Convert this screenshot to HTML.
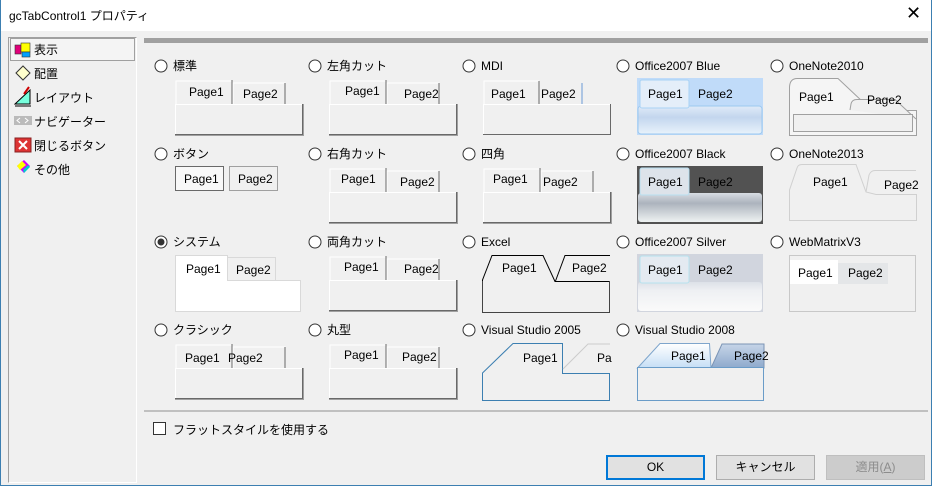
<!DOCTYPE html>
<html><head><meta charset="utf-8"><style>
body{margin:0;width:932px;height:486px;overflow:hidden;background:#f0f0f0;font-family:"Liberation Sans","Noto Sans CJK JP",sans-serif;font-size:12px;color:#000;position:relative}
.a{position:absolute}
.btn{position:absolute;top:455px;height:25px;width:99px;background:#e1e1e1;border:1px solid #adadad;box-sizing:border-box;text-align:center;line-height:23px;font-size:12px}
.li{position:absolute;left:14px;height:22px;line-height:22px;font-size:12px}
svg text{font-family:"Liberation Sans","Noto Sans CJK JP",sans-serif;font-size:12px}
</style></head><body>
<div class="a" style="left:0;top:0;width:932px;height:31px;background:#fff"></div>
<div class="a" style="left:9px;top:7px;font-size:12px">gcTabControl1 プロパティ</div>
<div class="a" style="left:906px;top:3px;font-size:18px;font-weight:300">✕</div>
<div class="a" style="left:0;top:0;width:1px;height:486px;background:#3c7fb1"></div>
<div class="a" style="right:0;top:0;width:1px;height:486px;background:#3c7fb1"></div>
<div class="a" style="left:0;bottom:0;width:932px;height:1px;background:#3c7fb1"></div>

<div class="a" style="left:8px;top:37px;width:127px;height:444px;border:1px solid #a0a0a0;border-right-color:#fff;border-bottom-color:#fff;background:#f0f0f0"></div>
<div class="a" style="left:10px;top:38px;width:125px;height:23px;border:1px solid #a0a0a0;box-sizing:border-box;background:#f4f4f4"></div>
<svg class="a" style="left:14px;top:42px" width="18" height="140">
<rect x="1" y="3" width="6" height="9" fill="#e0007a" stroke="#333" stroke-width=".6"/><rect x="7" y="1" width="9" height="9" fill="#ffff00" stroke="#333" stroke-width=".6"/><rect x="8" y="10" width="8" height="5" fill="#00a0ff" stroke="#333" stroke-width=".6"/>
<path d="M2 31 L9 24 L16 31 L9 38Z" fill="#ffffcc" stroke="#333"/>
<path d="M1 62 L16 48 L16 62Z M1 64 H17" fill="#7fd" stroke="#000"/><path d="M10 52 L15 45" stroke="#c00" stroke-width="2"/>
<rect x="0" y="74" width="18" height="9" fill="#bbb"/><path d="M6 76 L3 78.5 L6 81 M11 76 L14 78.5 L11 81" stroke="#fff" fill="none"/>
<rect x="1" y="96" width="16" height="14" fill="#d33" stroke="#822"/><path d="M5 99 L13 107 M13 99 L5 107" stroke="#fff" stroke-width="2"/>
<path d="M3 124 L10 118 L16 124 L10 131Z" fill="#c0f"/><path d="M3 124 L8 119 L12 123 L6 128Z" fill="#ff0"/><path d="M9 128 L14 123 L16 125 L10 131Z" fill="#0cc"/>
</svg>
<div class="li" style="left:34px;top:39px">表示</div>
<div class="li" style="left:34px;top:63px">配置</div>
<div class="li" style="left:34px;top:87px">レイアウト</div>
<div class="li" style="left:34px;top:111px">ナビゲーター</div>
<div class="li" style="left:34px;top:135px">閉じるボタン</div>
<div class="li" style="left:34px;top:159px">その他</div>

<div class="a" style="left:144px;top:38px;width:784px;height:5px;background:#a0a0a0"></div>
<div class="a" style="left:144px;top:410px;width:784px;height:2px;background:#c0c0c0"></div>

<svg class="a" style="left:0;top:0" width="932" height="486">
<defs>
<g id="rad"><circle cx="0" cy="0" r="6" fill="#fff" stroke="#333"/></g>
<g id="cls"><path d="M1 25 V2 H57 V25" fill="#f0f0f0" stroke="#fff"/><path d="M57 1 V25" stroke="#696969"/><path d="M58 25 V4 H110 V25" fill="#f0f0f0" stroke="#fff"/><path d="M110 4 V25" stroke="#696969"/>
<rect x="0.5" y="25.5" width="127" height="30" fill="#f0f0f0" stroke="#fff"/><path d="M127.5 25 V55.5 H0" stroke="#696969" fill="none"/><path d="M128.5 25 V56.5 H0" stroke="#a0a0a0" fill="none"/><path d="M0.5 25.5 H58" stroke="#fff"/></g>
</defs>
<g fill="none">
<use href="#rad" x="161" y="66"/><use href="#rad" x="315" y="66"/><use href="#rad" x="469" y="66"/><use href="#rad" x="623" y="66"/><use href="#rad" x="777" y="66"/>
<use href="#rad" x="161" y="154"/><use href="#rad" x="315" y="154"/><use href="#rad" x="469" y="154"/><use href="#rad" x="623" y="154"/><use href="#rad" x="777" y="154"/>
<use href="#rad" x="161" y="242"/><use href="#rad" x="315" y="242"/><use href="#rad" x="469" y="242"/><use href="#rad" x="623" y="242"/><use href="#rad" x="777" y="242"/>
<use href="#rad" x="161" y="330"/><use href="#rad" x="315" y="330"/><use href="#rad" x="469" y="330"/><use href="#rad" x="623" y="330"/>
</g>
<circle cx="161" cy="242" r="3.5" fill="#333"/>
<g fill="#000">
<text x="173" y="70">標準</text><text x="327" y="70">左角カット</text><text x="481" y="70">MDI</text><text x="635" y="70">Office2007 Blue</text><text x="789" y="70">OneNote2010</text>
<text x="173" y="158">ボタン</text><text x="327" y="158">右角カット</text><text x="481" y="158">四角</text><text x="635" y="158">Office2007 Black</text><text x="789" y="158">OneNote2013</text>
<text x="173" y="246">システム</text><text x="327" y="246">両角カット</text><text x="481" y="246">Excel</text><text x="635" y="246">Office2007 Silver</text><text x="789" y="246">WebMatrixV3</text>
<text x="173" y="334">クラシック</text><text x="327" y="334">丸型</text><text x="481" y="334">Visual Studio 2005</text><text x="635" y="334">Visual Studio 2008</text>
</g>
<!-- classic 3D previews -->
<g transform="translate(175,79)"><use href="#cls"/><text x="14" y="17">Page1</text><text x="68" y="19">Page2</text></g>
<g transform="translate(329,79)"><use href="#cls"/><text x="16" y="16">Page1</text><text x="75" y="19">Page2</text></g>
<g transform="translate(483,79)"><path d="M1 25 V2 H56" stroke="#fff" fill="none"/><path d="M56 2 V25" stroke="#696969"/><path d="M99 4 V25" stroke="#6a9ad6"/><rect x="0.5" y="25.5" width="127" height="30" fill="#f0f0f0" stroke="#fff"/><path d="M127.5 25 V55.5 H0" stroke="#696969" fill="none"/><text x="8" y="19">Page1</text><text x="58" y="19">Page2</text></g>
<g transform="translate(329,167)"><use href="#cls"/><text x="12" y="16">Page1</text><text x="71" y="19">Page2</text></g>
<g transform="translate(483,167)"><use href="#cls"/><text x="10" y="16">Page1</text><text x="60" y="19">Page2</text></g>
<g transform="translate(329,255)"><use href="#cls"/><text x="15" y="16">Page1</text><text x="75" y="18">Page2</text></g>
<g transform="translate(175,343)"><use href="#cls"/><text x="10" y="19">Page1</text><text x="53" y="19">Page2</text></g>
<g transform="translate(329,343)"><use href="#cls"/><text x="15" y="16">Page1</text><text x="73" y="18">Page2</text></g>
<!-- button -->
<rect x="175.5" y="166.5" width="48" height="24" fill="#f8f8f8" stroke="#696969"/><rect x="229.5" y="166.5" width="48" height="24" fill="#f0f0f0" stroke="#a0a0a0"/>
<text x="184" y="183">Page1</text><text x="238" y="183">Page2</text>
<!-- system -->
<rect x="175.5" y="280.5" width="125" height="31" fill="#fff" stroke="#d9d9d9"/><rect x="227.5" y="257.5" width="48" height="23" fill="#f0f0f0" stroke="#d9d9d9"/><rect x="176" y="255" width="51" height="27" fill="#fff"/><path d="M175.5 281 V255.5 H227.5 V281" stroke="#d9d9d9" fill="none"/>
<text x="186" y="273">Page1</text><text x="236" y="274">Page2</text>
<!-- excel -->
<path d="M482.5 281 V280 L492 255.5 H543 L555 281.5 H609.5" fill="none" stroke="#000"/><path d="M555.5 281 L565 255.5 H610" fill="none" stroke="#000"/><path d="M482.5 281 V312.5 H609.5 V281" fill="none" stroke="#444"/>
<text x="502" y="272">Page1</text><text x="572" y="272">Page2</text>
<!-- vs2005 -->
<path d="M482.5 373 L513 343.5 H562.5 V373.5 H609.5 V400.5 H482.5Z" fill="#f0f0f0" stroke="#3c7fb1"/><path d="M563 369 L588 344 H610" stroke="#ccc" fill="none"/>
<text x="523" y="362">Page1</text><text x="597" y="362">Pa</text>
<!-- vs2008 -->
<defs><linearGradient id="vb" x1="0" y1="0" x2="0" y2="1"><stop offset="0" stop-color="#fff"/><stop offset="1" stop-color="#c5def5"/></linearGradient><linearGradient id="vb2" x1="0" y1="0" x2="0" y2="1"><stop offset="0" stop-color="#c6d5e8"/><stop offset="1" stop-color="#8ea9cc"/></linearGradient></defs>
<path d="M711 368 L722 344 H764 V368Z" fill="url(#vb2)" stroke="#7b94b5"/>
<path d="M637.5 368 L660 343.5 H709.5 L711 368Z" fill="url(#vb)" stroke="#7ea5cc"/>
<rect x="637.5" y="367.5" width="126" height="33" fill="#f0f0f0" stroke="#6a9cc8"/>
<text x="671" y="360">Page1</text><text x="734" y="360">Page2</text>
<!-- office blue -->
<defs><linearGradient id="ob" x1="0" y1="0" x2="0" y2="1"><stop offset="0" stop-color="#e0ebf8"/><stop offset=".4" stop-color="#c3d6ee"/><stop offset="1" stop-color="#e8f2fb"/></linearGradient>
<linearGradient id="obk" x1="0" y1="0" x2="0" y2="1"><stop offset="0" stop-color="#d8dde3"/><stop offset=".35" stop-color="#acb3bd"/><stop offset="1" stop-color="#eef2f2"/></linearGradient>
<linearGradient id="os" x1="0" y1="0" x2="0" y2="1"><stop offset="0" stop-color="#dde1e8"/><stop offset=".3" stop-color="#eef0f3"/><stop offset="1" stop-color="#fafafa"/></linearGradient></defs>
<rect x="637" y="78" width="126" height="57" fill="#c0dbf9"/><rect x="638" y="106" width="124" height="28" rx="3" fill="url(#ob)" stroke="#9cc8ef"/><rect x="640" y="80" width="49" height="28" rx="2" fill="#e4eef9" stroke="#a9d3f5"/>
<text x="648" y="98">Page1</text><text x="698" y="98">Page2</text>
<rect x="637" y="166" width="126" height="58" fill="#525252"/><rect x="638" y="193" width="124" height="29" rx="3" fill="url(#obk)"/><rect x="640" y="168" width="49" height="27" rx="2" fill="#dde3ea" stroke="#b8dff0"/>
<text x="648" y="186">Page1</text><text x="698" y="186">Page2</text>
<rect x="637" y="254" width="126" height="58" fill="#d1d5de"/><rect x="638" y="282" width="124" height="29" rx="3" fill="url(#os)"/><rect x="640" y="256" width="49" height="27" rx="2" fill="#e4eaf1" stroke="#b6e2ee"/>
<text x="648" y="274">Page1</text><text x="698" y="274">Page2</text>
<!-- onenote 2010 -->
<path d="M789.5 135.5 V87 Q790 78 798 78.5 H838 L872 110.5 H916.5 V135.5Z" fill="#f5f5f5" stroke="#a0a0a0"/><path d="M850 110 L851 104 Q852 99 858 99.5 H895 L916 119" fill="#f0f0f0" stroke="#a0a0a0"/>
<rect x="793.5" y="114.5" width="119" height="17" fill="#f0f0f0" stroke="#a0a0a0"/>
<text x="799" y="101">Page1</text><text x="867" y="104">Page2</text>
<!-- onenote 2013 -->
<path d="M789.5 220.5 V190 L797 168 Q798 164 803 164.5 H856 L866 192 L876 194.5 H916.5 V220.5Z" fill="#f0f0f0" stroke="#d0d0d0"/><path d="M866 192 L869 175 Q871 170 876 170.5 H916" fill="none" stroke="#d0d0d0"/>
<text x="813" y="186">Page1</text><text x="884" y="189">Page2</text>
<!-- webmatrix -->
<rect x="789.5" y="255.5" width="126" height="56" fill="#f0f0f0" stroke="#c8c8c8"/><rect x="790" y="260" width="48" height="24" fill="#fff"/><rect x="838" y="263" width="50" height="21" fill="#e4e6e8"/>
<text x="798" y="277">Page1</text><text x="848" y="277">Page2</text>
</svg>

<div class="a" style="left:153px;top:422px;width:11px;height:11px;border:1px solid #333;background:#fff"></div>
<div class="a" style="left:173px;top:421px">フラットスタイルを使用する</div>
<div class="btn" style="left:606px;border:2px solid #0078d7;line-height:21px">OK</div>
<div class="btn" style="left:716px">キャンセル</div>
<div class="btn" style="left:826px;background:#cccccc;border-color:#bfbfbf;color:#8c8c8c">適用(<u>A</u>)</div>
</body></html>
